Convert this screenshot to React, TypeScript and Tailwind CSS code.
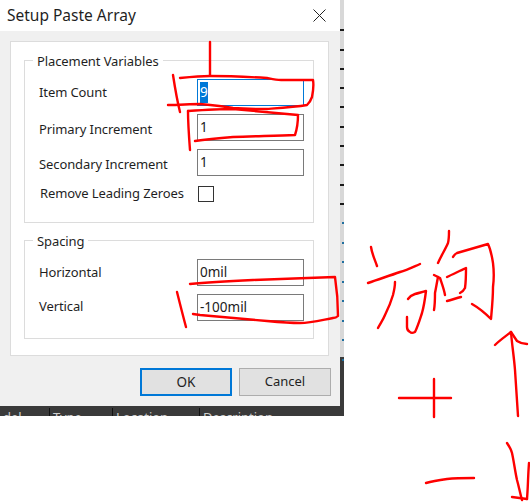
import type { ReactNode } from "react";

// hand-drawn red marks, in page coordinates
const marks = [
  "M210 42 L210 75",
  "M180 78 C190 77 200 76 210 76 C230 76 250 77 267 78 C272 79 276 80 281 80 L313 80 C314 86 313 92 312 97 C311 100 309 103 307 105 C295 107 280 108 267 109 C255 109 245 109 233 108 C222 106 211 105 200 104 C190 104 179 105 168 105",
  "M173 75 C175 88 177 100 180 112",
  "M188 111 C203 110 218 109 233 109 C255 111 277 113 298 115 C298 122 297 129 295 135 C275 136 254 136 233 137 C220 138 208 139 195 141",
  "M188 111 C188 124 189 137 190 150",
  "M190 284 C211 282 232 281 253 280 C280 279 308 278 335 277 C337 290 338 303 338 316 C336 318 335 318 333 318 C322 320 311 323 300 323 C289 323 278 322 267 321 C244 319 222 317 200 315 L193 314",
  "M177 292 C180 304 183 316 186 327",
  "M371 247 C372 254 375 260 377 266",
  "M368 283 C379 279 389 276 400 272 C407 270 413 267 420 264",
  "M395 282 C395 287 394 291 393 295 C391 302 388 309 385 315 C383 320 380 324 378 328",
  "M408 299 C410 296 412 295 415 294 C419 293 422 292 426 291 C425 299 424 306 422 313 C420 319 418 326 415 332 C413 333 411 333 410 332 C408 331 407 329 407 327 C407 324 407 320 407 317",
  "M449 231 C449 235 449 239 448 243 C445 250 441 256 438 263",
  "M453 257 C454 255 455 254 457 253 C467 250 478 247 488 244 C491 250 492 257 493 263 C494 271 494 279 493 287 C493 298 492 308 491 319 C485 313 479 308 472 304",
  "M434 275 C436 276 438 277 440 278 C442 284 444 289 445 295",
  "M438 277 C437 282 436 288 435 293 C435 299 435 304 434 310",
  "M447 277 C453 274 460 271 466 268 C466 275 466 281 465 288 C464 290 462 292 460 293",
  "M447 301 C452 300 456 298 461 297",
  "M495 345 C500 340 506 336 511 332 C513 335 515 338 517 341 C520 343 524 344 527 344",
  "M511 332 C512 345 514 357 515 370 C516 385 517 401 518 416",
  "M399 398 C406 398 413 398 420 398 C430 398 441 398 451 398",
  "M434 379 L434 417",
  "M426 483 C433 481 440 480 447 479 C456 478 465 478 474 478",
  "M507 443 C509 446 511 449 512 453 C514 462 515 471 517 480 C519 487 520 493 522 500",
  "M512 497 L527 499",
  "M527 499 C528 487 528 475 529 463",
];

const darkTicks = Array.from({ length: 10 }, (_, i) => i);
const blueTicks = Array.from({ length: 8 }, (_, i) => i);

function Field({ children, focused }: { children: ReactNode; focused?: boolean }) {
  return (
    <div
      className={`flex h-[27px] w-[107px] items-center border bg-white pl-[2px] text-[13.5px] text-[#202020] ${
        focused ? "border-[#0078d7]" : "border-[#7a7a7a]"
      }`}
    >
      {children}
    </div>
  );
}

function Row({ label, labelClass, children }: { label: string; labelClass?: string; children: ReactNode }) {
  return (
    <div className="flex items-center justify-between">
      <span className={`text-[13px] tracking-[-0.1px] ${labelClass ?? ""}`}>{label}</span>
      {children}
    </div>
  );
}

function Group({ title, className, children }: { title: string; className: string; children: ReactNode }) {
  return (
    <div className={`relative border border-[#dcdcdc] pl-[14px] pr-[9px] ${className}`}>
      <span className="absolute -top-[9px] left-[8px] bg-white px-[4px] text-[13px] leading-[18px] tracking-[-0.1px]">
        {title}
      </span>
      {children}
    </div>
  );
}

export default function App() {
  return (
    <div className="relative h-[502px] w-[530px] overflow-hidden bg-white font-['Noto_Sans',sans-serif] text-[#1f1f1f]">
      <div className="flex h-[416px] w-[344px] flex-col bg-[#3a3a3a]">
        <div className="flex h-[406px]">
          <div className="flex h-full w-[340px] flex-col bg-[#f0f0f0]">
            <div className="flex h-[31px] items-center justify-between bg-white pl-[7px] pr-[14px]">
              <span className="text-[15.5px]">Setup Paste Array</span>
              <svg width="13" height="13" viewBox="0 0 13 13" stroke="#222" fill="none">
                <path d="M0.5 0.5 L12.5 12.5 M12.5 0.5 L0.5 12.5" />
              </svg>
            </div>
            <div className="ml-[10px] mt-[10px] flex h-[315px] w-[319px] flex-col border border-[#dcdcdc] bg-white pl-[13px] pr-[14px] pt-[18px]">
              <Group title="Placement Variables" className="h-[163px] pt-[18px]">
                <div className="flex flex-col gap-[8px]">
                  <Row label="Item Count">
                    <Field focused>
                      <span className="bg-[#0078d7] text-white">9</span>
                    </Field>
                  </Row>
                  <Row label="Primary Increment" labelClass="pt-[4px]">
                    <Field>1</Field>
                  </Row>
                  <Row label="Secondary Increment" labelClass="pt-[4px]">
                    <Field>1</Field>
                  </Row>
                </div>
                <div className="mt-[8px] flex items-center">
                  <span className="ml-[1px] w-[158px] text-[13px] tracking-[-0.1px]">Remove Leading Zeroes</span>
                  <div className="h-[16px] w-[16px] border border-[#333] bg-white" />
                </div>
              </Group>
              <Group title="Spacing" className="mt-[17px] h-[99px] pt-[18px]">
                <div className="flex flex-col gap-[8px]">
                  <Row label="Horizontal">
                    <Field>0mil</Field>
                  </Row>
                  <Row label="Vertical" labelClass="pb-[2px]">
                    <Field>-100mil</Field>
                  </Row>
                </div>
              </Group>
            </div>
            <div className="mt-[12px] flex justify-end gap-[7px] pr-[9px]">
              <button className="h-[28px] w-[92px] border-2 border-[#0078d7] bg-[#e1e1e1] text-[13.5px]">OK</button>
              <button className="h-[28px] w-[92px] border border-[#adadad] bg-[#e1e1e1] text-[13px]">Cancel</button>
            </div>
          </div>
          {/* sliver of the window behind the dialog */}
          <div className="flex h-[357px] w-[4px] flex-col bg-[#d8d8d8] pt-[12px]">
            {darkTicks.map((i) => (
              <div key={i} className="h-[19.3px] shrink-0 border-b-2 border-[#1a1a1a]" />
            ))}
            {blueTicks.map((i) => (
              <div key={i} className="flex h-[19.5px] shrink-0 items-end justify-end">
                <div className="h-[2px] w-[2px] bg-[#1f6f9f]" />
              </div>
            ))}
          </div>
        </div>
        <div className="flex h-[10px] overflow-hidden bg-[#3a3a3a] pt-[2px] text-[13px] leading-[18px] text-[#cfcfcf]">
          <span className="h-[18px] w-[50px] border-r border-[#111] pl-[3px]">del</span>
          <span className="h-[18px] w-[63px] border-r border-[#111] pl-[3px]">Type</span>
          <span className="h-[18px] w-[87px] border-r border-[#111] pl-[3px]">Location</span>
          <span className="h-[18px] pl-[3px]">Description</span>
        </div>
      </div>
      <svg className="absolute left-0 top-0" width="530" height="502" fill="none" stroke="#fe0000" strokeWidth="2.4" strokeLinecap="round" strokeLinejoin="round">
        {marks.map((d) => (
          <path key={d} d={d} />
        ))}
      </svg>
    </div>
  );
}
